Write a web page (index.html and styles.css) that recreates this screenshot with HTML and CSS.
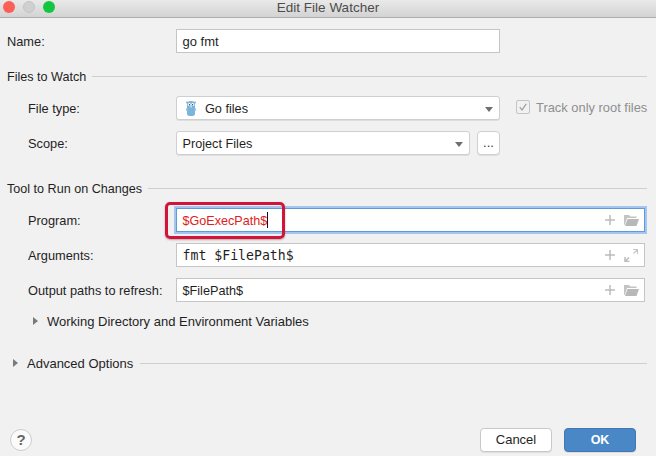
FILE: index.html
```html
<!DOCTYPE html>
<html lang="en">
<head>
<meta charset="utf-8">
<title>Edit File Watcher</title>
<link rel="stylesheet" href="styles.css">
</head>
<body>
<div class="window">
  <header class="titlebar">
    <div class="lights"><span class="light red"></span><span class="light gray"></span><span class="light green"></span></div>
    <div class="title">Edit File Watcher</div>
  </header>
  <main class="content">
    <div class="row">
      <label class="label top">Name:</label>
      <div class="field name-field"><span class="value large">go fmt</span></div>
    </div>
    <div class="section first"><span>Files to Watch</span><i class="rule"></i></div>
    <div class="row sub mt12">
      <label class="label">File type:</label>
      <div class="field select type-select">
        <svg class="gopher" width="10" height="17" viewBox="0 0 10 17"><path d="M1 3.5C1 1.8 2.8 1 5 1s4 .8 4 2.5V14c0 1.400-1.500 2-4 2s-4-.6-4-2z" fill="#7db4dc"/><rect x="0" y="1.500" width="2" height="2" rx="1" fill="#7db4dc"/><rect x="8" y="1.500" width="2" height="2" rx="1" fill="#7db4dc"/><circle cx="3.300" cy="4.500" r="1.500" fill="#fff"/><circle cx="6.700" cy="4.500" r="1.500" fill="#fff"/><circle cx="3.500" cy="4.700" r=".7" fill="#24445c"/><circle cx="6.500" cy="4.700" r=".7" fill="#24445c"/><rect x="4.300" y="6" width="1.400" height="1.500" fill="#e8e4d8"/><rect x="0" y="8" width="1.500" height="3" rx=".7" fill="#9cc8e6"/><rect x="8.500" y="8" width="1.500" height="3" rx=".7" fill="#9cc8e6"/></svg>
        <span class="value">Go files</span><i class="caret-down"></i>
      </div>
      <div class="check-wrap">
        <span class="checkbox"><svg width="14" height="14" viewBox="0 0 14 14"><path d="M3.800 7.200l2.200 2.800 4.200-6.200" fill="none" stroke="#9c9c9c" stroke-width="1.200"/></svg></span>
        <span class="check-text">Track only root files</span>
      </div>
    </div>
    <div class="row sub mt11">
      <label class="label">Scope:</label>
      <div class="field select scope-select"><span class="value">Project Files</span><i class="caret-down"></i></div>
      <button class="dots">...</button>
    </div>
    <div class="section second"><span>Tool to Run on Changes</span><i class="rule"></i></div>
    <div class="row sub mt12">
      <label class="label">Program:</label>
      <div class="field wide focused">
        <span class="value error">$GoExecPath$</span><i class="text-caret"></i>
        <span class="icons">
          <svg class="plus" width="10" height="10" viewBox="0 0 10 10"><path d="M5 0v10M0 5h10" stroke="#bcbcbc" stroke-width="1.500"/></svg>
          <svg class="folder" width="15" height="11" viewBox="0 0 15 11"><path d="M0 0h5l1.500 1.500h6V3H3L1 9.500 0 10z" fill="#c4c4c4"/><path d="M3.500 4H15l-2.500 7H1z" fill="#b8b8b8"/></svg>
        </span>
      </div>
      <div class="highlight"></div>
    </div>
    <div class="row sub mt11">
      <label class="label">Arguments:</label>
      <div class="field wide">
        <span class="value mono">fmt $FilePath$</span>
        <span class="icons">
          <svg class="plus" width="10" height="10" viewBox="0 0 10 10"><path d="M5 0v10M0 5h10" stroke="#bcbcbc" stroke-width="1.500"/></svg>
          <svg class="folder" width="15" height="13" viewBox="0 0 15 13"><path d="M9 0.500h4.500V5M13.500.500L9.500 4.500" fill="none" stroke="#c8c8c8" stroke-width="1.200"/><path d="M1 8v4.500h4.500M1 12.500l4-4" fill="none" stroke="#bcbcbc" stroke-width="1.500"/></svg>
        </span>
      </div>
    </div>
    <div class="row sub mt11">
      <label class="label">Output paths to refresh:</label>
      <div class="field wide">
        <span class="value">$FilePath$</span>
        <span class="icons">
          <svg class="plus" width="10" height="10" viewBox="0 0 10 10"><path d="M5 0v10M0 5h10" stroke="#bcbcbc" stroke-width="1.500"/></svg>
          <svg class="folder" width="15" height="11" viewBox="0 0 15 11"><path d="M0 0h5l1.500 1.500h6V3H3L1 9.500 0 10z" fill="#c4c4c4"/><path d="M3.500 4H15l-2.500 7H1z" fill="#b8b8b8"/></svg>
        </span>
      </div>
    </div>
    <div class="disclosure working"><i class="tri"></i><span>Working Directory and Environment Variables</span></div>
    <div class="disclosure advanced"><i class="tri"></i><span>Advanced Options</span><i class="rule"></i></div>
  </main>
  <footer class="footer">
    <button class="help">?</button>
    <div class="actions">
      <button class="btn">Cancel</button>
      <button class="btn primary">OK</button>
    </div>
  </footer>
</div>
</body>
</html>
```
FILE: styles.css
```css
* { box-sizing: border-box; }
html, body { margin: 0; height: 100%; overflow: hidden; }
body { background: #f1f1f1; color: #1f1f1f; font: 13px/16px "Liberation Sans", Arial, sans-serif; }
.window { height: 456px; display: flex; flex-direction: column; }

.titlebar { height: 18px; flex: none; position: relative; display: flex; justify-content: center; background: linear-gradient(#e9e9e9, #d3d3d3); border-bottom: 1px solid #aeaeae; }
.title { color: #4d4d4d; line-height: 15px; font-size: 13.5px; }
.lights { position: absolute; left: 3px; top: 1px; display: flex; gap: 8px; }
.light { width: 12px; height: 12px; border-radius: 50%; }
.red { background: #fb5f58; }
.gray { background: #d0d0d0; border: 1px solid #c4c4c4; }
.green { background: #12c73f; }

.content { flex: 1; padding: 11px 9px 0 7px; display: flex; flex-direction: column; }
.row { display: flex; align-items: center; height: 24px; position: relative; flex: none; }
.sub { padding-left: 21px; }
.mt12 { margin-top: 12px; }
.mt11 { margin-top: 11px; }
.label { width: 148px; flex: none; padding-top: 2px; font-size: 12.8px; }
.label.top { width: 169px; }

.field { height: 24px; background: #fff; border: 1px solid #c5c5c5; display: flex; align-items: center; padding-left: 5.500px; flex: none; position: relative; }
.name-field { width: 324px; }
.select { border-radius: 3px; border-color: #cfcfcf; box-shadow: 0 1px 0 #dedede; }
.type-select { width: 324px; }
.scope-select { width: 294px; }
.wide { width: 469px; }
.value { white-space: pre; padding-top: 2px; font-size: 12.700px; }
.value.large { font-size: 13px; }
.value.mono { font: 13.200px/16px "DejaVu Sans Mono", monospace; }
.value.error { color: #e0201c; font-size: 12.600px; }
.gopher { margin: 0 9px 0 3.500px; flex: none; }
.caret-down { position: absolute; right: 6px; top: 10px; width: 0; height: 0; border: 4.500px solid transparent; border-top: 5px solid #6f6f6f; border-bottom: 0; }

.focused { border: 1px solid #5f9bdc; box-shadow: 0 0 0 2px #a5c6ec; }
.text-caret { width: 1px; height: 16px; background: #111; margin-left: 0; }
.icons { position: absolute; right: 5px; top: 0; bottom: 0; display: flex; align-items: center; gap: 9px; }
.plus { flex: none; }
.folder { flex: none; }
.highlight { position: absolute; left: 158px; top: -6px; width: 120px; height: 37px; border: 3px solid #d2143a; border-radius: 5px; box-shadow: 0 1px 2px rgba(90, 20, 30, .35); }

.check-wrap { display: flex; align-items: center; margin-left: 16px; gap: 6px; color: #8f8f8f; margin-top: -2px; white-space: nowrap; }
.checkbox { width: 14px; height: 14px; border: 1px solid #c4c4c4; border-radius: 2px; background: #f1f1f1; display: block; }
.checkbox svg { display: block; margin: -1px; }
.check-text { padding-top: 2px; font-size: 12.900px; }
.dots { width: 23px; height: 24px; margin-left: 7px; background: #fff; border: 1px solid #d0d0d0; border-radius: 4px; box-shadow: 0 1px 0 #dedede; padding: 0; font: 13px/16px "Liberation Sans", sans-serif; color: #333; flex: none; }

.section { display: flex; align-items: center; height: 16px; flex: none; gap: 6px; }
.section span { padding-top: 2px; font-size: 12.600px; }
.section.first { margin-top: 15px; }
.section.second { margin-top: 25px; }
.rule { flex: 1; height: 1px; background: #cfcfcf; display: block; }

.disclosure { display: flex; align-items: center; height: 16px; flex: none; }
.disclosure span { padding-top: 2px; }
.tri { width: 0; height: 0; border: 4px solid transparent; border-left: 5px solid #7a7a7a; border-right: 0; margin-right: 9px; flex: none; }
.working { margin: 11px 0 0 26px; }
.advanced { margin: 26px 0 0 6px; }
.advanced .rule { margin-left: 7px; }

.footer { height: 28px; flex: none; padding: 0 20px 0 10px; display: flex; justify-content: space-between; align-items: flex-start; }
.help { width: 22px; height: 22px; margin-top: 1px; border-radius: 50%; background: #fbfbfb; border: 1px solid #cdcdcd; padding: 0; color: #666; font: bold 15px/20px "Liberation Sans", sans-serif; }
.actions { display: flex; gap: 12px; }
.btn { width: 72px; height: 24px; background: #fff; border: 1px solid #c9c9c9; border-radius: 4px; padding: 0; font: 13px/16px "Liberation Sans", sans-serif; color: #1f1f1f; box-shadow: 0 1px 0 #dedede; }
.primary { background: #4a87c7; border-color: #3f78b5; color: #fff; font-weight: bold; font-size: 12.500px; }
```
